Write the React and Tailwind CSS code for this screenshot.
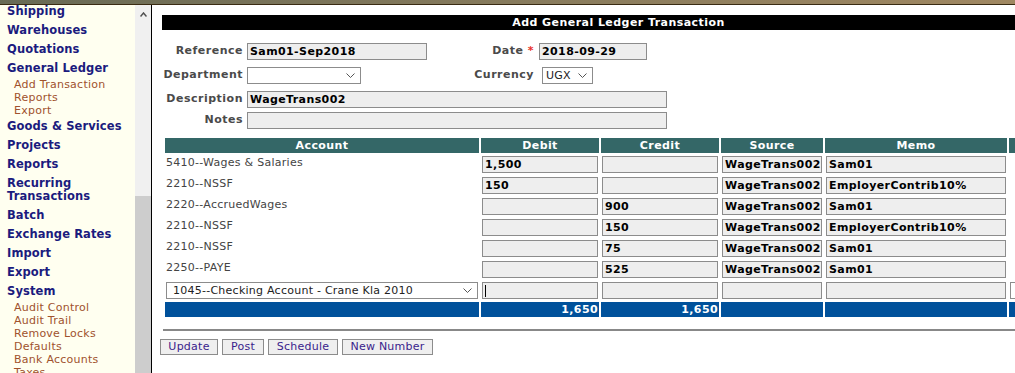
import React from 'react';

const nav = [
  { label: 'Shipping' },
  { label: 'Warehouses' },
  { label: 'Quotations' },
  { label: 'General Ledger', subs: ['Add Transaction', 'Reports', 'Export'] },
  { label: 'Goods & Services' },
  { label: 'Projects' },
  { label: 'Reports' },
  { label: 'Recurring Transactions', lines: ['Recurring', 'Transactions'] },
  { label: 'Batch' },
  { label: 'Exchange Rates' },
  { label: 'Import' },
  { label: 'Export' },
  {
    label: 'System',
    subs: ['Audit Control', 'Audit Trail', 'Remove Locks', 'Defaults', 'Bank Accounts', 'Taxes'],
  },
];

const lines = [
  { account: '5410--Wages & Salaries', debit: '1,500', credit: '', source: 'WageTrans002', memo: 'Sam01' },
  { account: '2210--NSSF', debit: '150', credit: '', source: 'WageTrans002', memo: 'EmployerContrib10%' },
  { account: '2220--AccruedWages', debit: '', credit: '900', source: 'WageTrans002', memo: 'Sam01' },
  { account: '2210--NSSF', debit: '', credit: '150', source: 'WageTrans002', memo: 'EmployerContrib10%' },
  { account: '2210--NSSF', debit: '', credit: '75', source: 'WageTrans002', memo: 'Sam01' },
  { account: '2250--PAYE', debit: '', credit: '525', source: 'WageTrans002', memo: 'Sam01' },
];

function Chevron() {
  return (
    <svg width="9" height="5" viewBox="0 0 9 5" className="shrink-0">
      <polyline points="0.5,0.5 4.5,4.5 8.5,0.5" fill="none" stroke="#555" strokeWidth="1" />
    </svg>
  );
}

function Field({ value, className = '', caret = false }) {
  return (
    <div
      className={`h-[17px] border border-[#8c8c8c] bg-[#eeeeee] px-[2px] text-[11px] font-bold tracking-[0.4px] leading-[15px] text-black whitespace-nowrap overflow-hidden flex items-center ${className}`}
    >
      {caret && <span className="block w-[1px] h-[12px] bg-black" />}
      {value}
    </div>
  );
}

function Select({ value, className = '' }) {
  return (
    <div
      className={`h-[17px] border border-[#8c8c8c] bg-white pl-[3px] pr-[5px] text-[11px] font-normal tracking-[0.25px] leading-[15px] text-[#222] flex items-center justify-between whitespace-nowrap ${className}`}
    >
      <span>{value}</span>
      <Chevron />
    </div>
  );
}

const cols = {
  account: 'w-[314px]',
  debit: 'w-[118px]',
  credit: 'w-[118px]',
  source: 'w-[102px]',
  memo: 'w-[182px]',
  extra: 'w-[66px]',
};

export default function App() {
  return (
    <div className="w-[1015px] h-[373px] overflow-hidden bg-white flex flex-col font-['DejaVu_Sans',Verdana,sans-serif]">
      <div className="h-[5px] shrink-0 bg-gradient-to-r from-[#686a55] via-[#877b5d] to-[#a08862] border-b border-[#3a2b12]" />
      <div className="flex flex-1 min-h-0">
        <aside className="w-[135px] shrink-0 bg-[#fffff0] overflow-hidden">
          <ul className="-mt-[3px]">
            {nav.map((item) => (
              <li key={item.label}>
                <div className="py-[3px] pl-[7px] text-[11.5px] font-bold leading-[13px] tracking-[0.1px] text-[#1b1b7e]">
                  {(item.lines || [item.label]).map((l) => (
                    <div key={l}>{l}</div>
                  ))}
                </div>
                {item.subs && (
                  <ul>
                    {item.subs.map((s) => (
                      <li key={s} className="pl-[14px] text-[11px] leading-[13px] tracking-[0.25px] text-[#a0522d]">
                        {s}
                      </li>
                    ))}
                  </ul>
                )}
              </li>
            ))}
          </ul>
        </aside>
        <div className="w-[16px] shrink-0 bg-[#f0f0f0] flex flex-col">
          <div className="h-[16px] flex items-center justify-center pt-[2px]">
            <svg width="7" height="5" viewBox="0 0 7 5">
              <polyline points="0.5,4.5 3.5,1 6.5,4.5" fill="none" stroke="#505050" strokeWidth="1.5" />
            </svg>
          </div>
          <div className="h-[175px]" />
          <div className="flex-1 bg-[#cdcdcd]" />
        </div>
        <div className="w-[1px] shrink-0 bg-black" />

        <main className="flex-1 min-w-0 overflow-hidden">
          <div className="ml-[10px] mt-[10px] w-[913px] h-[15px] bg-black text-center text-[11px] font-bold tracking-[0.45px] leading-[15px] text-white">
            Add General Ledger Transaction
          </div>

          <div className="mt-[13px] flex items-center h-[17px] text-[11px] font-bold tracking-[0.5px] text-[#4a4a4a]">
            <div className="w-[91px] text-right">Reference</div>
            <Field value="Sam01-Sep2018" className="ml-[4px] w-[180px]" />
            <div className="w-[107px] text-right">
              Date <span className="text-[#e8312a]">*</span>
            </div>
            <Field value="2018-09-29" className="ml-[5px] w-[108px]" />
          </div>

          <div className="mt-[7px] flex items-center h-[17px] text-[11px] font-bold tracking-[0.5px] text-[#4a4a4a]">
            <div className="w-[91px] text-right">Department</div>
            <Select value="" className="ml-[4px] w-[114px]" />
            <div className="w-[173px] text-right">Currency</div>
            <Select value="UGX" className="ml-[8px] w-[51px]" />
          </div>

          <div className="mt-[7px] flex items-center h-[17px] text-[11px] font-bold tracking-[0.5px] text-[#4a4a4a]">
            <div className="w-[91px] text-right">Description</div>
            <Field value="WageTrans002" className="ml-[4px] w-[420px]" />
          </div>

          <div className="mt-[4px] flex items-center h-[17px] text-[11px] font-bold tracking-[0.5px] text-[#4a4a4a]">
            <div className="w-[91px] text-right">Notes</div>
            <Field value="" className="ml-[4px] w-[420px]" />
          </div>

          <div className="ml-[13px] mt-[9px] w-[912px]">
            <div className="flex gap-[2px] h-[15px] text-[11px] font-bold tracking-[0.4px] leading-[15px] text-white text-center">
              <div className={`${cols.account} bg-[#346767]`}>Account</div>
              <div className={`${cols.debit} bg-[#346767]`}>Debit</div>
              <div className={`${cols.credit} bg-[#346767]`}>Credit</div>
              <div className={`${cols.source} bg-[#346767]`}>Source</div>
              <div className={`${cols.memo} bg-[#346767]`}>Memo</div>
              <div className={`${cols.extra} bg-[#346767]`}></div>
            </div>

            {lines.map((r, i) => (
              <div key={i} className="mt-[2px] flex gap-[2px] h-[19px]">
                <div className={`${cols.account} pl-[1px] pt-[1px] text-[11px] tracking-[0.27px] leading-[13px] text-[#444]`}>
                  {r.account}
                </div>
                <div className={`${cols.debit} p-[1px]`}>
                  <Field value={r.debit} />
                </div>
                <div className={`${cols.credit} p-[1px]`}>
                  <Field value={r.credit} />
                </div>
                <div className={`${cols.source} p-[1px]`}>
                  <Field value={r.source} />
                </div>
                <div className={`${cols.memo} p-[1px]`}>
                  <Field value={r.memo} />
                </div>
                <div className={cols.extra} />
              </div>
            ))}

            <div className="mt-[2px] flex gap-[2px] h-[19px]">
              <div className={`${cols.account} p-[1px]`}>
                <Select value="1045--Checking Account - Crane Kla 2010" className="w-full pl-[6px]" />
              </div>
              <div className={`${cols.debit} p-[1px]`}>
                <Field value="" caret />
              </div>
              <div className={`${cols.credit} p-[1px]`}>
                <Field value="" />
              </div>
              <div className={`${cols.source} p-[1px]`}>
                <Field value="" />
              </div>
              <div className={`${cols.memo} p-[1px]`}>
                <Field value="" />
              </div>
              <div className={`${cols.extra} p-[1px]`}>
                <Field value="" className="bg-white" />
              </div>
            </div>

            <div className="mt-[2px] flex gap-[2px] h-[15px] text-[11px] font-bold tracking-[0.4px] leading-[15px] text-white text-right">
              <div className={`${cols.account} bg-[#00519b]`} />
              <div className={`${cols.debit} bg-[#00519b] pr-[1px]`}>1,650</div>
              <div className={`${cols.credit} bg-[#00519b] pr-[1px]`}>1,650</div>
              <div className={`${cols.source} bg-[#00519b]`} />
              <div className={`${cols.memo} bg-[#00519b]`} />
              <div className={`${cols.extra} bg-[#00519b]`} />
            </div>
          </div>

          <div className="ml-[11px] mt-[12px] w-[920px] h-[2px] bg-[#888]" />

          <div className="ml-[8px] mt-[8px] flex gap-[4px]">
            {[
              ['Update', 'w-[58px]'],
              ['Post', 'w-[42px]'],
              ['Schedule', 'w-[70px]'],
              ['New Number', 'w-[91px]'],
            ].map(([t, w]) => (
              <button
                key={t}
                type="button"
                className={`${w} h-[16px] border border-[#8c8c8c] bg-[#efefef] text-[11px] tracking-[0.25px] leading-[14px] text-[#3a1d8c]`}
              >
                {t}
              </button>
            ))}
          </div>
        </main>
      </div>
    </div>
  );
}
